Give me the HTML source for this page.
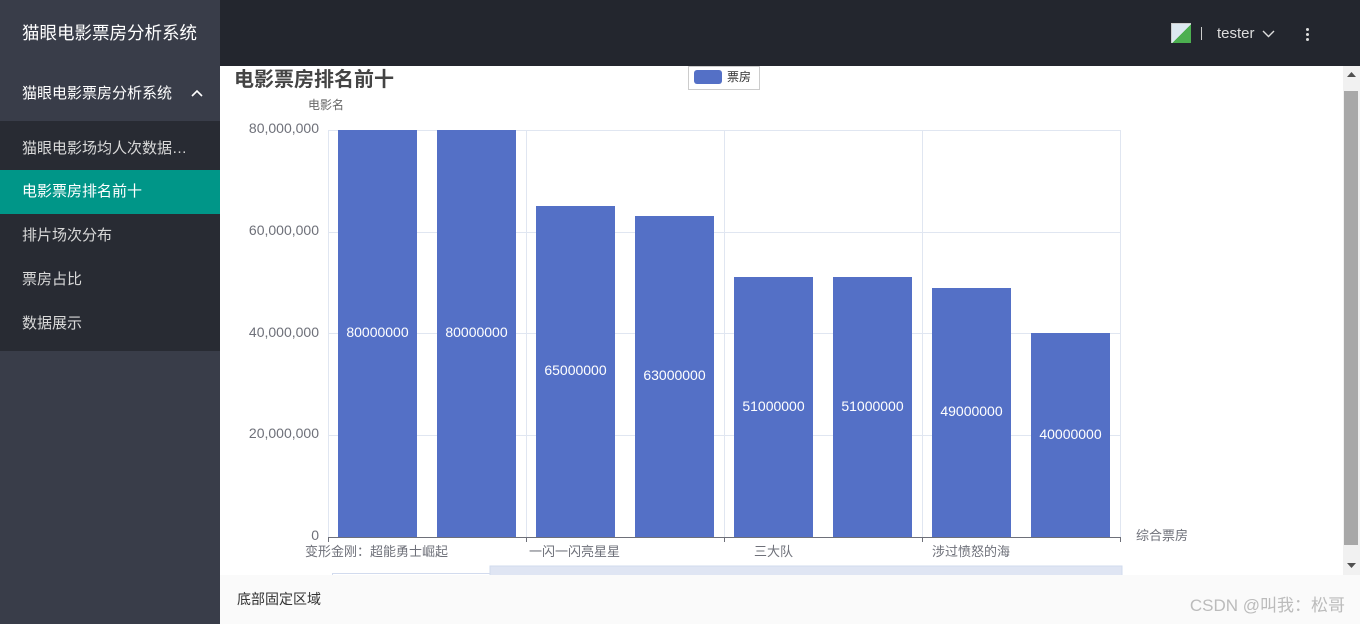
<!DOCTYPE html>
<html><head><meta charset="utf-8"><style>
*{margin:0;padding:0;box-sizing:border-box}
body{width:1360px;height:624px;overflow:hidden;font-family:"Liberation Sans","Noto Sans CJK SC",sans-serif;background:#fff;position:relative}
.side{position:absolute;left:0;top:0;width:220px;height:624px;background:#393d49}
.logo{height:66px;line-height:66px;padding-left:22px;color:#fff;font-size:17.5px}
.grp{height:55px;line-height:55px;padding-left:22px;color:#fff;font-size:15px;position:relative}
.sub{background:#282b33;padding:0}
.sub div{height:44px;line-height:44px;padding-left:22px;color:#d9d9d9;font-size:15px;white-space:nowrap;overflow:hidden}
.sub .act{background:#009688;color:#fff}
.hdr{position:absolute;left:220px;top:0;width:1140px;height:66px;background:#23262e}
.foot{position:absolute;left:220px;top:575px;width:1140px;height:49px;background:#fafafa;color:#333;font-size:14px;line-height:49px;padding-left:17px}
.sb{position:absolute;left:1343px;top:66px;width:17px;height:509px;background:#f1f1f1}
</style></head><body>
<div class="side">
<div class="logo">猫眼电影票房分析系统</div>
<div class="grp">猫眼电影票房分析系统<svg style="position:absolute;left:191px;top:23px" width="12" height="8"><path d="M1 7L6 2L11 7" stroke="#fff" stroke-width="1.6" fill="none"/></svg></div>
<div class="sub">
<div style="padding-top:5px;height:49px;line-height:46px">猫眼电影场均人次数据…</div>
<div class="act">电影票房排名前十</div>
<div>排片场次分布</div>
<div>票房占比</div>
<div>数据展示</div>
<div style="height:5px"></div>
</div>
</div>
<div class="hdr">
<div style="position:absolute;left:951px;top:23px;width:20px;height:20px;border:1px solid #ccc;border-right:none;border-bottom:none;background:linear-gradient(135deg,#dde8f0 50%,#4caf50 50%)"></div>
<div style="position:absolute;left:981px;top:27px;width:1px;height:13px;background:#ccc"></div>
<div style="position:absolute;left:997px;top:25px;color:#ddd;font-size:15px">tester</div>
<svg style="position:absolute;left:1042px;top:30px" width="13" height="8"><path d="M1 1L6.5 6.5L12 1" stroke="#ddd" stroke-width="1.4" fill="none"/></svg>
<div style="position:absolute;left:1086px;top:28px;width:3px;height:3px;border-radius:2px;background:#ddd;box-shadow:0 5px 0 #ddd,0 10px 0 #ddd"></div>
</div>
<svg style="position:absolute;left:220px;top:66px" width="1123" height="509" font-family="Liberation Sans, Noto Sans CJK SC, sans-serif">
<g transform="translate(-220,-66)">
<text x="234" y="86" font-size="20" font-weight="bold" fill="#444">电影票房排名前十</text>
<rect x="688.5" y="66.5" width="71" height="23" fill="#fff" stroke="#ccc"/>
<rect x="694" y="70" width="28" height="14" rx="3" fill="#5470c6"/>
<text x="727" y="81" font-size="12" fill="#333">票房</text>
<text x="308" y="109" font-size="12" fill="#666">电影名</text>
<g stroke="#e0e6f1" fill="none">
<line x1="328" y1="130.5" x2="1120" y2="130.5"/><line x1="328" y1="232.5" x2="1120" y2="232.5"/><line x1="328" y1="333.5" x2="1120" y2="333.5"/><line x1="328" y1="435.5" x2="1120" y2="435.5"/>
<line x1="328.5" y1="130" x2="328.5" y2="537"/><line x1="526.5" y1="130" x2="526.5" y2="537"/><line x1="724.5" y1="130" x2="724.5" y2="537"/><line x1="922.5" y1="130" x2="922.5" y2="537"/><line x1="1120.5" y1="130" x2="1120.5" y2="537"/>
</g>
<g font-size="14" fill="#6e7079" text-anchor="end">
<text x="319" y="133">80,000,000</text><text x="319" y="235">60,000,000</text><text x="319" y="337">40,000,000</text><text x="319" y="438">20,000,000</text><text x="319" y="540">0</text>
</g>
<g fill="#5470c6">
<rect x="338" y="130" width="79" height="407"/><rect x="437" y="130" width="79" height="407"/>
<rect x="536" y="206" width="79" height="331"/><rect x="635" y="216" width="79" height="321"/>
<rect x="734" y="277" width="79" height="260"/><rect x="833" y="277" width="79" height="260"/>
<rect x="932" y="288" width="79" height="249"/><rect x="1031" y="333" width="79" height="204"/>
</g>
<g font-size="14" fill="#fff" text-anchor="middle">
<text x="377.5" y="337">80000000</text><text x="476.5" y="337">80000000</text>
<text x="575.5" y="375">65000000</text><text x="674.5" y="380">63000000</text>
<text x="773.5" y="411">51000000</text><text x="872.5" y="411">51000000</text>
<text x="971.5" y="416">49000000</text><text x="1070.5" y="439">40000000</text>
</g>
<g stroke="#6e7079"><line x1="328" y1="537.5" x2="1121" y2="537.5"/>
<line x1="328.5" y1="537" x2="328.5" y2="542"/><line x1="526.5" y1="537" x2="526.5" y2="542"/><line x1="724.5" y1="537" x2="724.5" y2="542"/><line x1="922.5" y1="537" x2="922.5" y2="542"/><line x1="1120.5" y1="537" x2="1120.5" y2="542"/></g>
<g font-size="13" fill="#6e7079">
<text x="305" y="556">变形金刚：超能勇士崛起</text><text x="529" y="556">一闪一闪亮星星</text><text x="754" y="556">三大队</text><text x="932" y="556">涉过愤怒的海</text>
<text x="1136" y="540">综合票房</text></g>
<rect x="332.5" y="573.5" width="789" height="10" fill="none" stroke="#d2dbee"/>
<rect x="490" y="566" width="632" height="10" fill="#dfe5f3" stroke="#d2dbee"/>
</g></svg>
<div class="sb"><div style="position:absolute;left:1px;top:25px;width:14px;height:454px;background:#a8a8a8"></div>
<svg style="position:absolute;left:4px;top:6px" width="9" height="6"><path d="M0 5L4.5 0L9 5Z" fill="#505050"/></svg>
<svg style="position:absolute;left:4px;top:497px" width="9" height="6"><path d="M0 0L4.5 5L9 0Z" fill="#505050"/></svg></div>
<div class="foot">底部固定区域<span style="position:absolute;right:15px;top:0;color:#bbb;font-size:17px;line-height:62px">CSDN @叫我：松哥</span></div>
</body></html>
